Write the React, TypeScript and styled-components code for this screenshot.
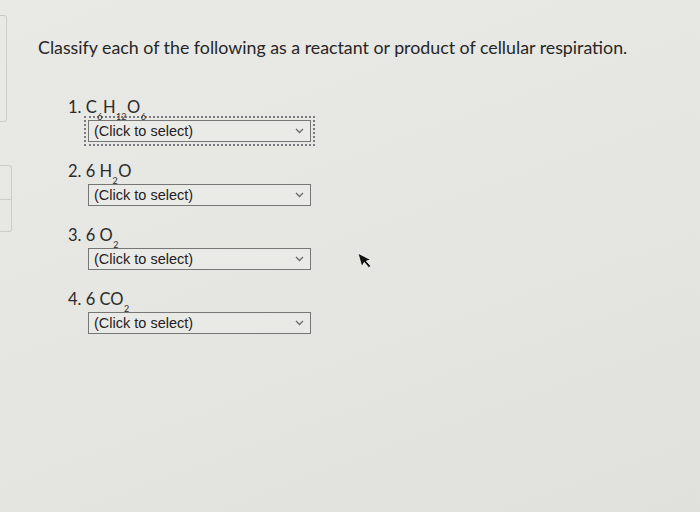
import React from "react";
import styled, { createGlobalStyle } from "styled-components";

const Global = createGlobalStyle`
  html, body { margin: 0; padding: 0; }
  body { font-family: Lato, "Open Sans", sans-serif; }
`;

const Page = styled.div`
  position: relative;
  display: flex;
  width: 700px;
  height: 512px;
  overflow: hidden;
  background: linear-gradient(160deg, #e9e9e5 0%, #e5e5e1 55%, #e0e0dc 100%);
  color: #2b2b2b;
`;

const Rail = styled.div`
  width: 11px;
  padding-top: 15px;
  display: flex;
  flex-direction: column;
  align-items: flex-start;
  flex-shrink: 0;
`;

const RailBox = styled.div<{ $w: number; $h: number; $mt: number }>`
  width: ${(p) => p.$w}px;
  height: ${(p) => p.$h}px;
  margin-top: ${(p) => p.$mt}px;
  border: 1px solid #cdcdc8;
  border-left: none;
  border-radius: 0 3px 3px 0;
  display: flex;
  flex-direction: column;
`;

const RailDivider = styled.div`
  margin-top: 33px;
  border-top: 1px solid #cdcdc8;
`;

const Main = styled.div`
  padding: 35px 0 0 27px;
  display: flex;
  flex-direction: column;
`;

const Title = styled.h1`
  margin: 0;
  font-size: 17.8px;
  font-weight: 400;
  line-height: 24px;
  color: #262626;
`;

const List = styled.ol`
  list-style: none;
  margin: 38px 0 0 30px;
  padding: 0;
  display: flex;
  flex-direction: column;
  gap: 19px;
`;

const Item = styled.li`
  display: flex;
  flex-direction: column;
`;

const Label = styled.div`
  height: 20px;
  font-size: 16.5px;
  line-height: 20px;
  color: #2b2b2b;
  white-space: nowrap;
`;

const Sub = styled.span`
  font-size: 9px;
  line-height: 0;
  position: relative;
  top: 7px;
  margin: 0 0.5px;
`;

const SelectBox = styled.div<{ $focused?: boolean }>`
  margin: 3px 0 0 20px;
  width: 223px;
  height: 22px;
  box-sizing: border-box;
  border: 1px solid #767676;
  background: rgba(240, 240, 237, 0.35);
  display: flex;
  align-items: center;
  justify-content: space-between;
  padding: 0 6px 0 5px;
  font-family: "Liberation Sans", Arial, sans-serif;
  font-size: 14.5px;
  color: #222;
  outline: ${(p) => (p.$focused ? "2px dotted #7a7a82" : "none")};
  outline-offset: 2px;
`;

const Chevron = () => (
  <svg width="9" height="6" viewBox="0 0 9 6">
    <polyline points="1,1 4.5,4.5 8,1" fill="none" stroke="#6a6a6a" strokeWidth="1.3" />
  </svg>
);

const Cursor = styled.svg`
  position: absolute;
  left: 359px;
  top: 250px;
  transform: rotate(-16deg);
`;

const items: { n: number; label: React.ReactNode }[] = [
  {
    n: 1,
    label: (
      <>
        1. C<Sub>6</Sub>H<Sub>12</Sub>O<Sub>6</Sub>
      </>
    ),
  },
  {
    n: 2,
    label: (
      <>
        2. 6 H<Sub>2</Sub>O
      </>
    ),
  },
  {
    n: 3,
    label: (
      <>
        3. 6 O<Sub>2</Sub>
      </>
    ),
  },
  {
    n: 4,
    label: (
      <>
        4. 6 CO<Sub>2</Sub>
      </>
    ),
  },
];

export default function App() {
  return (
    <Page>
      <Global />
      <Rail>
        <RailBox $w={6} $h={105} $mt={0} />
        <RailBox $w={11} $h={65} $mt={43}>
          <RailDivider />
        </RailBox>
      </Rail>
      <Main>
        <Title>Classify each of the following as a reactant or product of cellular respiration.</Title>
        <List>
          {items.map((it) => (
            <Item key={it.n}>
              <Label>{it.label}</Label>
              <SelectBox $focused={it.n === 1}>
                <span>(Click to select)</span>
                <Chevron />
              </SelectBox>
            </Item>
          ))}
        </List>
      </Main>
      <Cursor width="14" height="20" viewBox="0 0 12 17">
        <polygon points="1,1 1,13 4,10 6.5,15.5 8.5,14.5 6,9.5 10,9.5" fill="#111" stroke="#fff" strokeWidth="0.6" />
      </Cursor>
    </Page>
  );
}
